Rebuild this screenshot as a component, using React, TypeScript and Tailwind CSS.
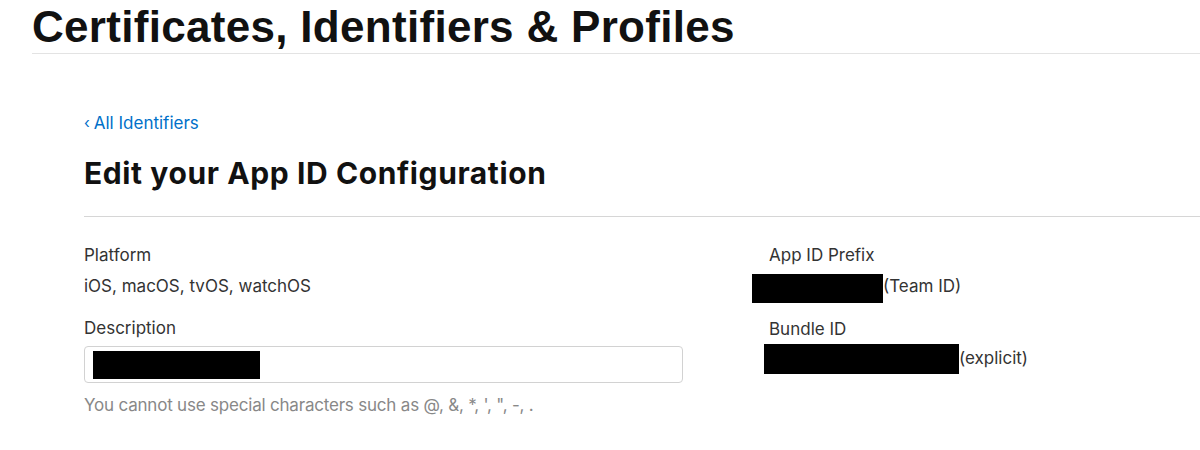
export default function App() {
  return (
    <div className="w-[1200px] h-[450px] bg-white overflow-hidden font-['Inter',sans-serif] text-[#333]">
      <header className="pl-8">
        <h1 className="font-['Liberation_Sans',Arial,sans-serif] font-bold text-[44px] leading-[53px] tracking-[0.3px] text-[#111]">
          Certificates, Identifiers &amp; Profiles
        </h1>
        <div className="border-t border-[#e3e3e3]" />
      </header>

      <main className="pl-[84px] pt-[57px]">
        <a href="#" className="flex items-center gap-[4px] text-[17px] leading-[24px] text-[#0070c9]">
          <span className="text-[15px]">‹</span>
          <span>All Identifiers</span>
        </a>
        <h2 className="mt-[21px] text-[30px] leading-[34px] font-bold text-[#111] tracking-[0.6px]">
          Edit your App ID Configuration
        </h2>
        <div className="mt-[26px] border-t border-[#d6d6d6]" />

        <div className="flex pt-[27px]">
          <div className="w-[599px]">
            <div className="text-[17px] leading-[22px] text-[#333]">Platform</div>
            <div className="mt-[9px] text-[17px] leading-[22px] text-[#333]">iOS, macOS, tvOS, watchOS</div>
            <div className="mt-[20px] text-[17px] leading-[22px] text-[#333]">Description</div>
            <div className="mt-[7px] h-[37px] rounded-[4px] border border-[#d2d2d2] flex items-center pl-[8px]">
              <div className="w-[167px] h-[28px] bg-black" />
            </div>
            <div className="mt-[12px] text-[17px] leading-[20px] text-[#888] tracking-[-0.2px]">
              You cannot use special characters such as @, &amp;, *, ', ", -, .
            </div>
          </div>

          <div className="ml-[86px]">
            <div className="text-[17px] leading-[22px] text-[#333]">App ID Prefix</div>
            <div className="mt-[8px] flex items-start text-[17px] leading-[22px]">
              <div className="-ml-[17px] w-[131px] h-[29px] bg-black" />
              <span className="mt-[1px]">(Team ID)</span>
            </div>
            <div className="mt-[15px] text-[17px] leading-[22px] text-[#333]">Bundle ID</div>
            <div className="mt-[4px] flex items-start text-[17px] leading-[22px]">
              <div className="-ml-[5px] w-[195px] h-[30px] bg-black" />
              <span className="mt-[3px]">(explicit)</span>
            </div>
          </div>
        </div>
      </main>
    </div>
  );
}
